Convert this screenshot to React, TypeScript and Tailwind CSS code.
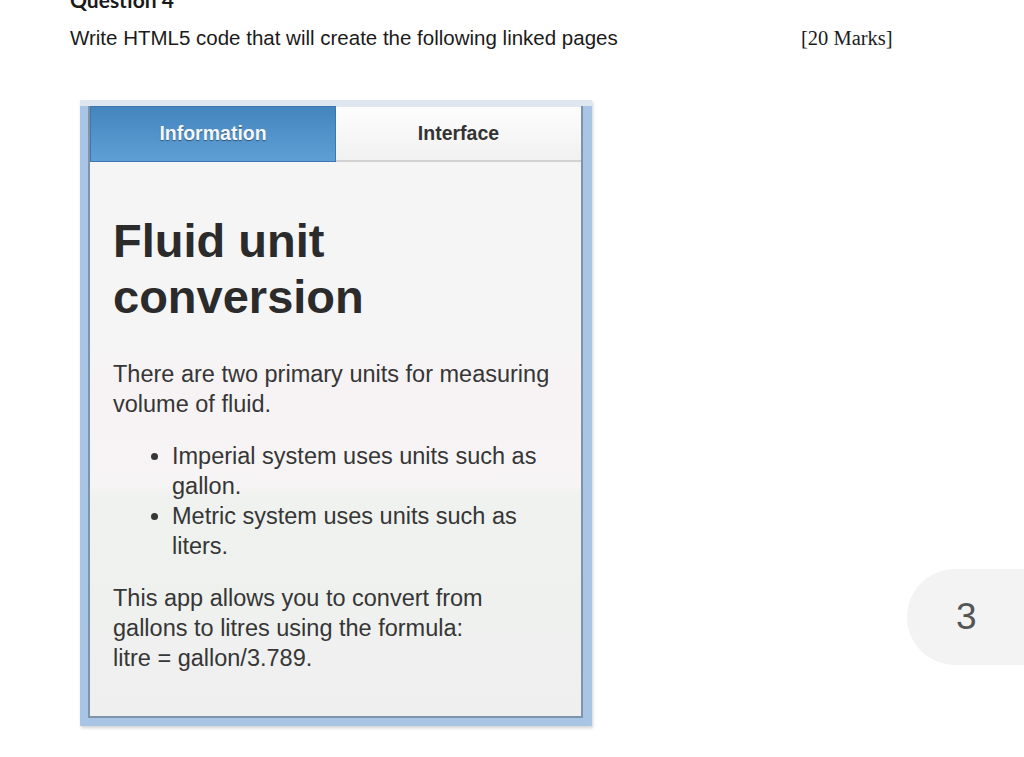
import React from "react";

export default function App() {
  return (
    <div className="w-[1024px] h-[757px] bg-white overflow-hidden font-['Liberation_Sans',Arial,sans-serif]">
      <div className="ml-[70px] mt-[-12px] h-[24px] leading-[24px] text-[21px] font-bold text-[#1a1a1a] font-['Lato','Open_Sans',sans-serif]">
        Question 4
      </div>
      <div className="ml-[70px] mt-[14px] flex h-[24px] items-center leading-[24px] text-[20.5px] text-[#1b1b1b]">
        <span className="w-[731px]">Write HTML5 code that will create the following linked pages</span>
        <span className="font-['Liberation_Serif','Times_New_Roman',serif] text-[20.5px]">[20 Marks]</span>
      </div>

      <div className="mt-[50px] flex items-start">
        {/* App frame */}
        <div className="ml-[80px] w-[512px] h-[626px] bg-[#a9c5e6] border-t-[6px] border-t-[#dee6ef] pl-[8px] pr-[9px] pb-[8px] shadow-[1px_2px_3px_rgba(0,0,0,0.18)] flex">
          <div className="flex-1 flex flex-col border-x-2 border-b-2 border-[#7f93aa] bg-[linear-gradient(to_bottom,#f5f5f5_0%,#f5f5f5_38%,#f7f3f4_45%,#f7f4f5_62%,#eff2ef_64%,#eff1ef_80%,#efefef_100%)]">
            <div className="flex h-[56px] shrink-0">
              <div className="w-[246px] flex items-center justify-center bg-[linear-gradient(to_bottom,#4585be,#5e9fd6)] border border-[#3c78ad] text-[19.5px] font-bold text-[#f4f7fa] [text-shadow:0_1px_1px_rgba(0,0,0,0.45)]">
                Information
              </div>
              <div className="flex-1 flex items-center justify-center bg-[linear-gradient(to_bottom,#fdfdfd,#f1f1f1)] border-t border-t-[#dfe6ee] border-b-2 border-b-[#d2d2d2] text-[19.5px] font-bold text-[#333333]">
                Interface
              </div>
            </div>
            <div className="pl-[23px] pr-[14px] text-[#363636]">
              <h1 className="mt-[51px] text-[47px] leading-[56px] font-bold text-[#2b2b2b]">
                Fluid unit
                <br />
                conversion
              </h1>
              <p className="mt-[34px] text-[23.5px] leading-[30px]">
                There are two primary units for measuring volume of fluid.
              </p>
              <ul className="mt-[22px] list-disc pl-[59px] text-[23.5px] leading-[30px] pr-[10px]">
                <li>Imperial system uses units such as gallon.</li>
                <li>Metric system uses units such as liters.</li>
              </ul>
              <p className="mt-[22px] text-[23.5px] leading-[30px] pr-[60px]">
                This app allows you to convert from gallons to litres using the formula: litre = gallon/3.789.
              </p>
            </div>
          </div>
        </div>

        {/* page number pill */}
        <div className="ml-auto mt-[469px] w-[117px] h-[96px] shrink-0 rounded-l-[48px] bg-[#f3f3f3] flex items-center pl-[49px] text-[37px] text-[#555555]">
          3
        </div>
      </div>
    </div>
  );
}
